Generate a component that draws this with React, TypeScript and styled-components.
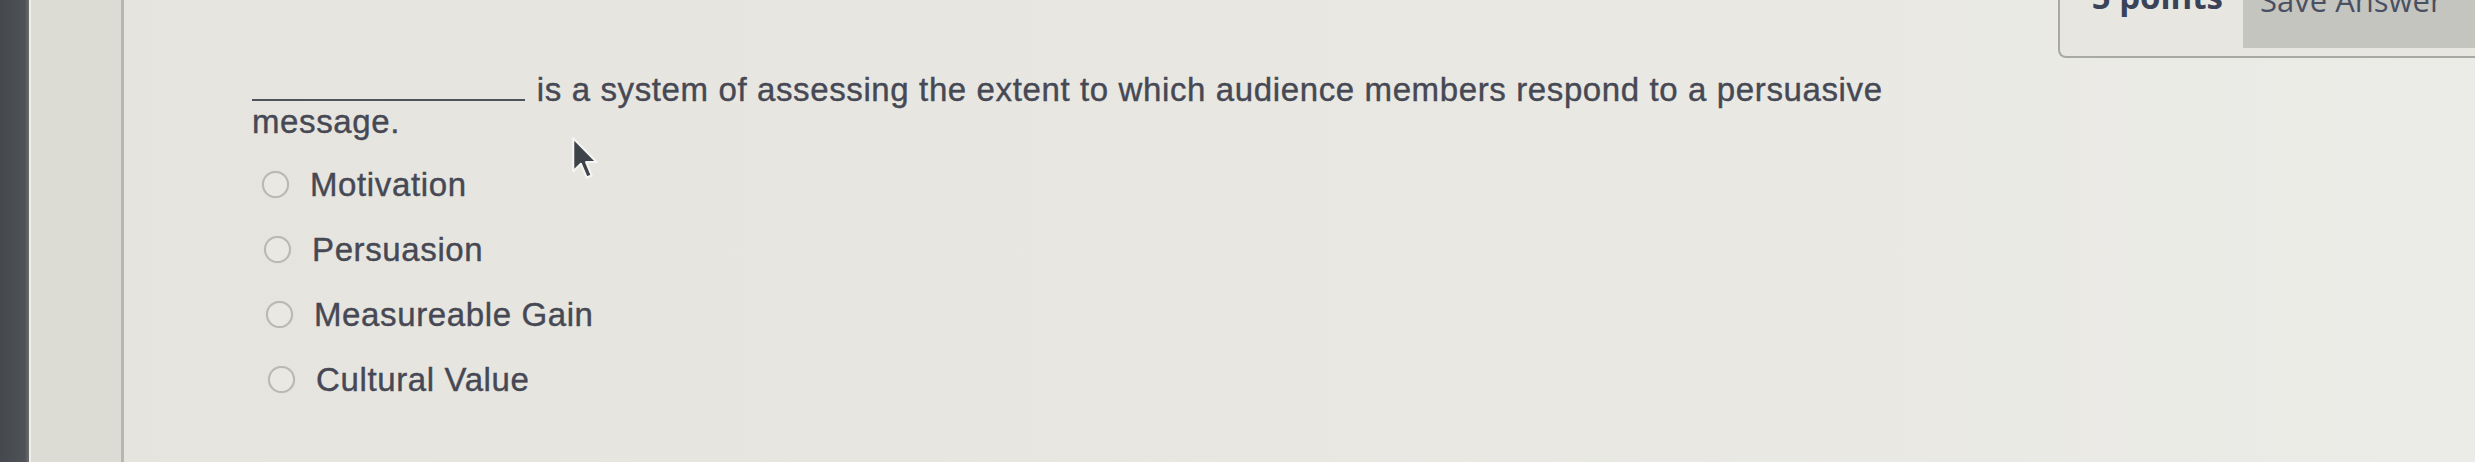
import React from "react";
import styled, { createGlobalStyle } from "styled-components";

const Global = createGlobalStyle`
  html, body { margin: 0; padding: 0; }
  body {
    width: 2475px;
    height: 462px;
    overflow: hidden;
    background: #e6e5df;
    font-family: "Liberation Sans", Arial, sans-serif;
  }
`;

const Page = styled.div`
  display: flex;
  width: 2475px;
  height: 462px;
  overflow: hidden;
`;

const DarkEdge = styled.div`
  width: 29px;
  flex: none;
  background: linear-gradient(90deg, #45484d 0%, #4e5156 85%, #6a6b6c 100%);
  border-right: 2px solid #efeee9;
`;

const SidePanel = styled.div`
  width: 90px;
  flex: none;
  background: #dcdbd4;
  border-right: 3px solid #b7b6b0;
`;

const Main = styled.main`
  position: relative;
  flex: 1;
  display: flex;
  flex-direction: column;
  background: linear-gradient(90deg, #e5e4de 0%, #e8e7e2 50%, #ebebe7 100%);
  padding-left: 128px;
`;

const TopBar = styled.header`
  display: flex;
  justify-content: flex-end;
  height: 58px;
`;

const PointsBox = styled.div`
  display: flex;
  align-items: flex-start;
  margin-top: -30px;
  height: 88px;
  box-sizing: border-box;
  padding-left: 32px;
  border: 2px solid #a9a9a4;
  border-right: none;
  border-radius: 0 0 0 8px;
  background: #e7e6e1;
`;

const Points = styled.span`
  font-family: "Open Sans", sans-serif;
  font-weight: 700;
  font-size: 33px;
  line-height: 1;
  color: #3a4258;
  margin-top: 8px;
  margin-right: 20px;
  white-space: nowrap;
`;

const SaveButton = styled.button`
  width: 232px;
  height: 76px;
  border: none;
  margin: 0;
  padding: 0 0 32px 17px;
  background: #c5c5bf;
  font-family: "Open Sans", sans-serif;
  font-size: 31px;
  line-height: 1;
  color: #4a5064;
  display: flex;
  align-items: flex-end;
  box-sizing: border-box;
  white-space: nowrap;
`;

const Question = styled.p`
  margin: 16px 0 0 0;
  width: 1780px;
  font-size: 33px;
  line-height: 32px;
  letter-spacing: 0.62px;
  color: #464854;
  -webkit-text-stroke: 0.4px #464854;
`;

const Blank = styled.span`
  display: inline-block;
  width: 273px;
  height: 2px;
  border-bottom: 2px solid #50525c;
  vertical-align: baseline;
  margin-right: 2px;
`;

const Options = styled.ul`
  list-style: none;
  margin: 14px 0 0 10px;
  padding: 0;
  display: flex;
  flex-direction: column;
`;

const Option = styled.li<{ $shift: number }>`
  display: flex;
  align-items: center;
  height: 65px;
  gap: 21px;
  padding-left: ${(p) => p.$shift}px;
`;

const Radio = styled.span`
  width: 23px;
  height: 23px;
  flex: none;
  border-radius: 50%;
  border: 2px solid #b9b9b3;
  background: #e9e8e3;
  box-shadow: 0 0 1px #c8c7c1;
`;

const Label = styled.span`
  font-size: 33px;
  line-height: 32px;
  letter-spacing: 0.62px;
  color: #464854;
  -webkit-text-stroke: 0.4px #464854;
`;

const Cursor = styled.svg`
  position: absolute;
  left: 446px;
  top: 136px;
  width: 30px;
  height: 45px;
  filter: blur(0.6px);
`;

const options = ["Motivation", "Persuasion", "Measureable Gain", "Cultural Value"];

export default function App() {
  return (
    <>
      <Global />
      <Page>
        <DarkEdge />
        <SidePanel />
        <Main>
          <TopBar>
            <PointsBox>
              <Points>5 points</Points>
              <SaveButton type="button">Save Answer</SaveButton>
            </PointsBox>
          </TopBar>
          <Question>
            <Blank /> is a system of assessing the extent to which audience members respond to a persuasive
            message.
          </Question>
          <Options>
            {options.map((o, i) => (
              <Option key={o} $shift={i * 2}>
                <Radio />
                <Label>{o}</Label>
              </Option>
            ))}
          </Options>
          <Cursor viewBox="0 0 13 21">
            <path
              d="M1 1 L1 16.5 L4.6 13 L7.3 19.4 L9.6 18.4 L7 12.2 L12 12.2 Z"
              fill="#3e4349"
              stroke="#f4f4f2"
              strokeWidth="1"
              strokeLinejoin="round"
            />
          </Cursor>
        </Main>
      </Page>
    </>
  );
}
